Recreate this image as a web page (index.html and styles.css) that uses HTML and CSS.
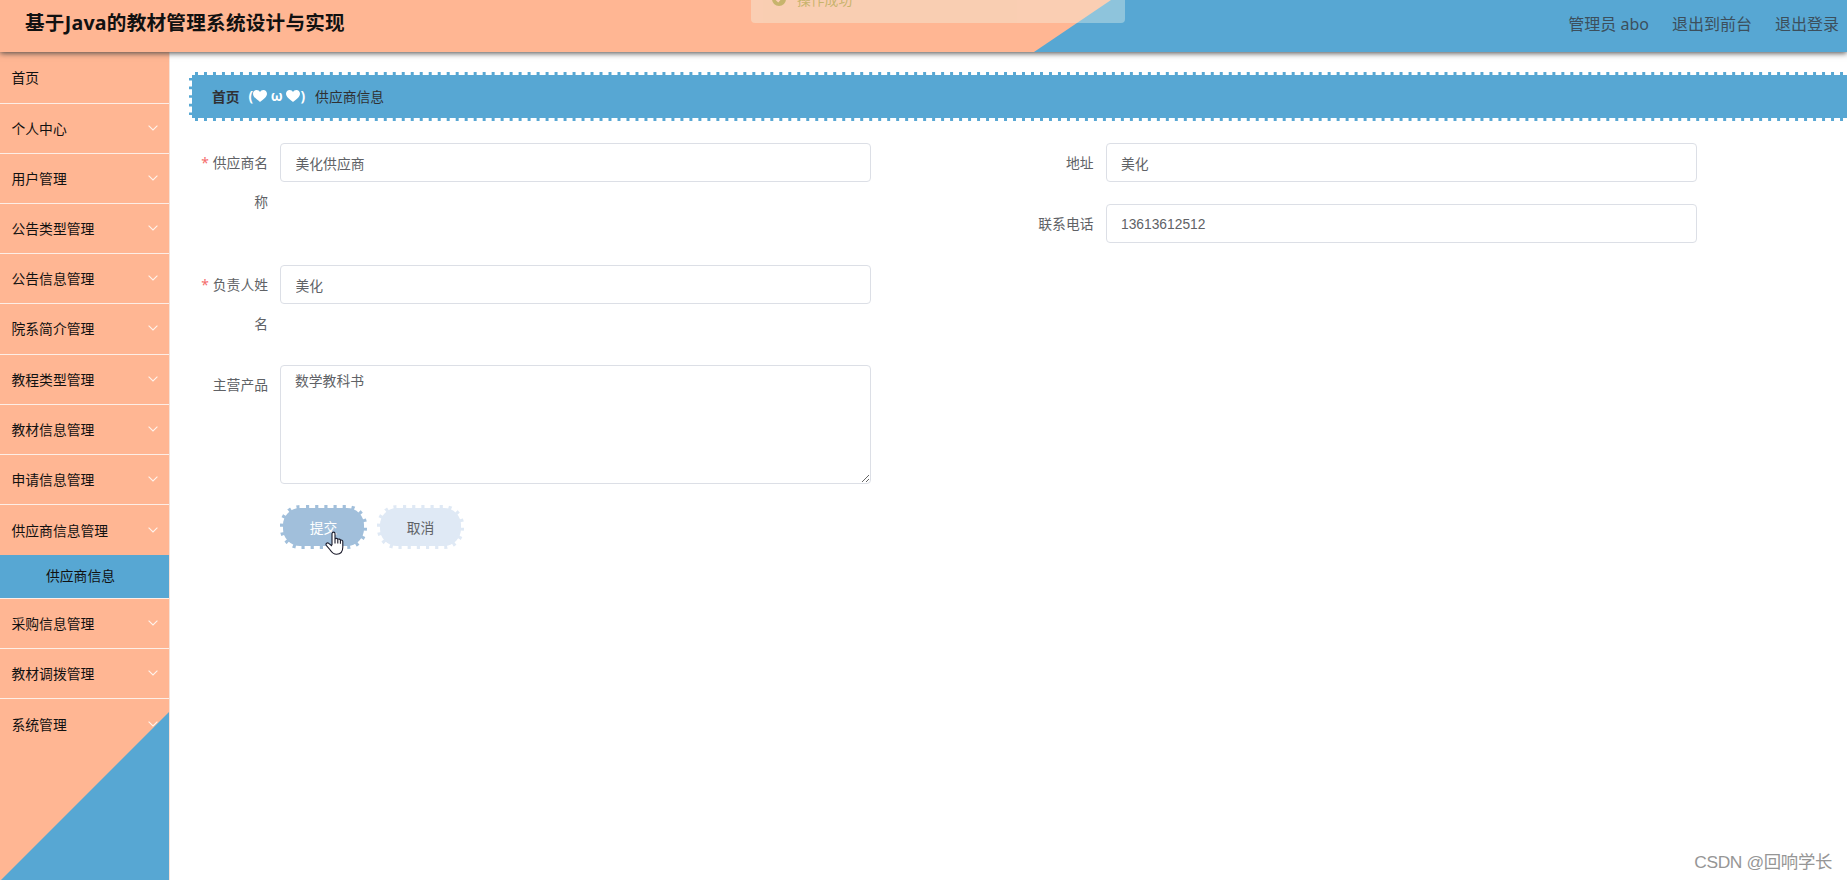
FILE: index.html
```
<!DOCTYPE html>
<html lang="zh-CN">
<head>
    <meta charset="UTF-8">
    <title>基于Java的教材管理系统设计与实现</title>
    <link rel="stylesheet" href="styles.css">
</head>
<body>
    <svg class="sprite">
        <symbol id="arrow" viewBox="0 0 10 6">
            <path d="M0.6 0.7 L5 5 L9.4 0.7" fill="none" stroke="currentColor" stroke-width="1.1"/>
        </symbol>
    </svg>

    <header class="navbar">
        <h1 class="title">基于Java的教材管理系统设计与实现</h1>
        <div class="user">
            <span>管理员 abo</span>
            <span>退出到前台</span>
            <span>退出登录</span>
        </div>
    </header>

    <div class="layout">
        <!-- Side menu -->
        <ul class="menu">
            <li class="menu-item">首页</li>
            <li class="menu-item">个人中心<svg class="arrow"><use href="#arrow"/></svg></li>
            <li class="menu-item">用户管理<svg class="arrow"><use href="#arrow"/></svg></li>
            <li class="menu-item">公告类型管理<svg class="arrow"><use href="#arrow"/></svg></li>
            <li class="menu-item">公告信息管理<svg class="arrow"><use href="#arrow"/></svg></li>
            <li class="menu-item">院系简介管理<svg class="arrow"><use href="#arrow"/></svg></li>
            <li class="menu-item">教程类型管理<svg class="arrow"><use href="#arrow"/></svg></li>
            <li class="menu-item">教材信息管理<svg class="arrow"><use href="#arrow"/></svg></li>
            <li class="menu-item">申请信息管理<svg class="arrow"><use href="#arrow"/></svg></li>
            <li class="menu-item open">供应商信息管理<svg class="arrow"><use href="#arrow"/></svg></li>
            <li class="submenu-item">供应商信息</li>
            <li class="menu-item">采购信息管理<svg class="arrow"><use href="#arrow"/></svg></li>
            <li class="menu-item">教材调拨管理<svg class="arrow"><use href="#arrow"/></svg></li>
            <li class="menu-item last">系统管理<svg class="arrow"><use href="#arrow"/></svg></li>
        </ul>

        <main class="main">
            <div class="breadcrumb">
                <span class="home">首页</span>
                <span class="separator">(<svg class="heart" viewBox="0 0 14 12"><path d="M7 12 C5 10 0 7.5 0 3.7 C0 1.5 1.7 0 3.6 0 C5.2 0 6.4 0.9 7 2 C7.6 0.9 8.8 0 10.4 0 C12.3 0 14 1.5 14 3.7 C14 7.5 9 10 7 12 Z"/></svg> ω <svg class="heart" viewBox="0 0 14 12"><path d="M7 12 C5 10 0 7.5 0 3.7 C0 1.5 1.7 0 3.6 0 C5.2 0 6.4 0.9 7 2 C7.6 0.9 8.8 0 10.4 0 C12.3 0 14 1.5 14 3.7 C14 7.5 9 10 7 12 Z"/></svg>)</span>
                <span class="current">供应商信息</span>
            </div>

            <form class="form">
                <div class="column">
                    <div class="field spaced">
                        <label class="required">供应商名称</label>
                        <input type="text" value="美化供应商">
                    </div>
                    <div class="field">
                        <label class="required">负责人姓名</label>
                        <input type="text" value="美化">
                    </div>
                    <div class="field">
                        <label>主营产品</label>
                        <textarea>数学教科书</textarea>
                    </div>
                    <div class="buttons">
                        <button type="button" class="submit">提交
                            <svg class="pointer" viewBox="0 0 19 24"><path d="M7 14 V2.7 C7 0.6 10 0.6 10 2.7 V8 C10.6 6.9 12.7 7.3 12.8 8.5 C13.5 7.7 15.3 8.1 15.4 9.3 C16.3 8.7 17.8 9.3 17.8 10.6 V16 C17.8 20.5 15.5 23.2 11.6 23.2 C8.2 23.2 6.8 21.6 5 18.7 L1.3 14.3 C0.2 12.6 2.4 11.2 3.8 12.4 L7 15 M10 8 V12.5 M12.8 8.5 V12.5 M15.4 9.3 V12.8"/></svg>
                        </button>
                        <button type="button" class="cancel">取消</button>
                    </div>
                </div>
                <div class="column">
                    <div class="field">
                        <label>地址</label>
                        <input type="text" value="美化">
                    </div>
                    <div class="field">
                        <label>联系电话</label>
                        <input type="text" value="13613612512">
                    </div>
                </div>
            </form>
        </main>
    </div>

    <!-- Success message sliding out at the top -->
    <div class="message">
        <svg class="message-icon" viewBox="0 0 14 14"><circle cx="7" cy="7" r="7" fill="currentColor"/><path d="M3.8 7.2 L6.2 9.5 L10.3 5" fill="none" stroke="#fff" stroke-width="1.3"/></svg>
        <span>操作成功</span>
    </div>

    <div class="watermark">CSDN @回响学长</div>
</body>
</html>
```
FILE: styles.css
```
* {
    box-sizing: border-box;
}

body {
    margin: 0;
    height: 880px;
    overflow: hidden;
    background-color: #fff;
    color: #606266;
    font-family: "Noto Sans", "Noto Sans CJK SC", sans-serif;
    font-size: 13.8px;
}

.sprite {
    display: none;
}

.navbar {
    position: relative;
    z-index: 2;
    display: flex;
    justify-content: space-between;
    align-items: center;
    height: 52px;
    padding: 0 8px 6px 25px;
    background-color: #ffb693;
    box-shadow: 0 1px 6px #444;
}

/* blue slanted half of the bar */
.navbar::before {
    content: "";
    position: absolute;
    top: 0;
    right: 0;
    bottom: 0;
    left: 1034px;
    background-color: #57a7d3;
    clip-path: polygon(77px 0, 100% 0, 100% 100%, 0 100%);
}

.title {
    margin: 0;
    color: #111;
    font-size: 19.6px;
    font-weight: bold;
    letter-spacing: 0.25px;
    line-height: 46px;
}

.user {
    position: relative;
    display: flex;
    gap: 23px;
    padding-bottom: 1px;
    color: #3c4f5c;
    font-size: 16px;
}

.layout {
    display: flex;
    height: 828px;
}

.menu {
    position: relative;
    flex: none;
    width: 170px;
    margin: 0;
    padding: 1.4px 0 0;
    list-style: none;
    background-color: #ffb693;
    border-right: 1px solid #f6e2d8;
    color: #111;
}

.menu::after {
    content: "";
    position: absolute;
    right: 0;
    bottom: 0;
    width: 168px;
    height: 168px;
    background-color: #57a7d3;
    clip-path: polygon(100% 0, 100% 100%, 0 100%);
}

.menu-item {
    display: flex;
    justify-content: space-between;
    align-items: center;
    height: 50.2px;
    padding: 0 11px 1px 11.5px;
    border-bottom: 1px solid #fdeee6;
}

.menu-item.open,
.menu-item.last {
    border-bottom: none;
}

.submenu-item {
    height: 43.5px;
    padding-left: 46px;
    line-height: 41px;
    background-color: #57a7d3;
    border-bottom: 1px solid #fdeee6;
}

.arrow {
    width: 10px;
    height: 6px;
    color: #fff3ec;
}

.main {
    flex: 1;
    min-width: 0;
    padding: 20px 0 0 19px;
}

.breadcrumb {
    display: flex;
    align-items: center;
    height: 49px;
    margin-right: -20px;
    padding: 0 0 2px 20px;
    background-color: #57a7d3;
    border: 3px dashed #fff;
    color: #303133;
}

.home {
    font-weight: 600;
}

.separator {
    margin: 0 10px 0 9px;
    color: #fff;
    font-weight: bold;
    white-space: pre;
}

.heart {
    width: 14px;
    height: 12px;
    fill: #fff;
    vertical-align: -1px;
}

.form {
    display: flex;
    padding-top: 22px;
}

.column {
    flex: none;
    width: 825.5px;
}

.field {
    display: flex;
    align-items: flex-start;
    margin-bottom: 22px;
}

.field.spaced {
    margin-bottom: 44px;
}

.field label {
    flex: none;
    width: 91px;
    padding-right: 12px;
    line-height: 39px;
    text-align: right;
}

.field label.required {
    padding-left: 8px;
}

.required::before {
    content: "*";
    margin-right: 4px;
    color: #f56c6c;
}

.field input,
.field textarea {
    width: 591px;
    height: 39px;
    margin: 0;
    padding: 1px 14.5px 0;
    border: 1px solid #dcdfe6;
    border-radius: 4px;
    outline: none;
    background-color: #fff;
    color: #606266;
    font-family: "Liberation Sans", "Noto Sans CJK SC", sans-serif;
    font-size: 13.8px;
}

.field textarea {
    height: 119px;
    padding: 6px 14px;
    line-height: 1.5;
}

.buttons {
    display: flex;
    gap: 10px;
    margin-top: -1px;
    padding-left: 91px;
}

.buttons button {
    position: relative;
    width: 87px;
    height: 44px;
    padding: 0 0 1px;
    border: 3px dashed #fff;
    border-radius: 20px;
    font-family: inherit;
    font-size: 13.8px;
}

.buttons .submit {
    background-color: #a1bfdb;
    color: #fff;
}

.buttons .cancel {
    background-color: #dfe9f5;
    color: #606266;
}

.pointer {
    position: absolute;
    top: 23px;
    left: 42px;
    width: 19px;
    height: 24px;
    fill: #fff;
    stroke: #1a1a2a;
    stroke-width: 1.1;
}

.message {
    position: absolute;
    z-index: 3;
    top: -24px;
    left: 751px;
    display: flex;
    align-items: center;
    gap: 11px;
    width: 374px;
    height: 47px;
    padding: 0 0 1px 21px;
    background-color: #f0f9eb;
    border-radius: 4px;
    color: #67b22a;
    opacity: 0.36;
}

.message-icon {
    width: 14px;
    height: 14px;
}

.watermark {
    position: absolute;
    right: 15px;
    bottom: 7px;
    color: #969696;
    font-family: "Liberation Sans", "Noto Sans CJK SC", sans-serif;
    font-size: 17.4px;
    letter-spacing: -0.35px;
}
```
